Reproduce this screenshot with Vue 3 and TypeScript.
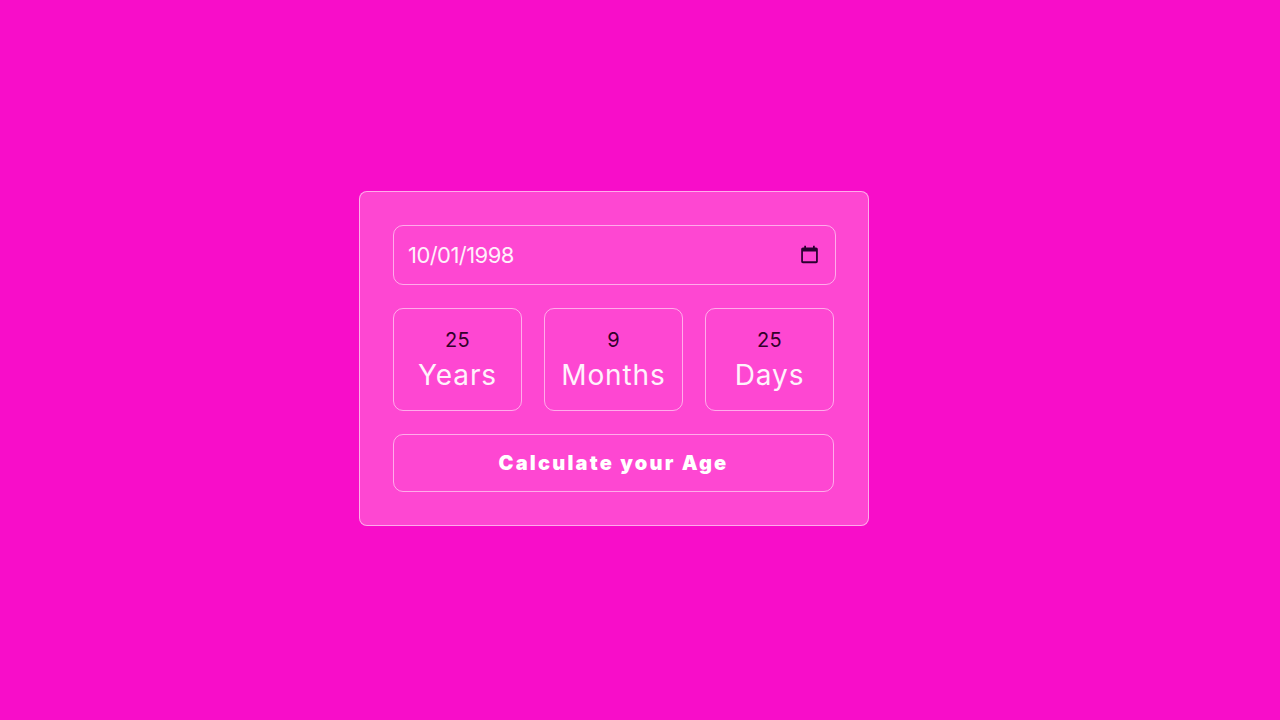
<script setup lang="ts">
interface AgePart { value: number; label: string; kind: string }
const parts: AgePart[] = [
  { value: 25, label: 'Years', kind: 'narrow' },
  { value: 9, label: 'Months', kind: 'wide' },
  { value: 25, label: 'Days', kind: 'narrow' },
]
</script>

<template>
  <main class="page">
    <section class="card">
      <div class="date-field">
        <span class="date-text">10/01/1998</span>
        <svg class="cal" viewBox="0 0 24 24" width="21" height="21" aria-hidden="true">
          <path fill="#2a0030" d="M19.500 4H18V2h-2v2H8V2H6v2H4.500C3.400 4 2.500 4.900 2.500 6v14c0 1.100.9 2 2 2h15c1.100 0 2-.9 2-2V6c0-1.100-.9-2-2-2zm0 15.800h-15V8.500h15v11.300z"/>
        </svg>
      </div>
      <div class="results">
        <div v-for="p in parts" :key="p.label" class="box" :class="p.kind">
          <span class="num">{{ p.value }}</span>
          <span class="label">{{ p.label }}</span>
        </div>
      </div>
      <button class="calc" type="button">Calculate your Age</button>
    </section>
  </main>
</template>

<style>
html, body { margin: 0; background: #f80dc9; }
</style>

<style scoped>
.page {
  width: 1280px;
  height: 720px;
  background: #f80dc9;
  overflow: hidden;
  font-family: "Inter", sans-serif;
}
.card {
  box-sizing: border-box;
  width: 510px;
  height: 335px;
  margin: 191px 0 0 359px;
  padding: 33px;
  background: #fe47d2;
  border: 1px solid rgba(255, 255, 255, 0.55);
  border-radius: 8px;
  display: flex;
  flex-direction: column;
}
.date-field {
  box-sizing: border-box;
  width: 443px;
  height: 60px;
  padding: 0 15px 0 14px;
  border: 1px solid rgba(255, 255, 255, 0.55);
  border-radius: 10px;
  display: flex;
  align-items: center;
  justify-content: space-between;
}
.date-text {
  color: #fff0fb;
  font-size: 22px;
  font-family: "Inter", sans-serif;
  font-weight: 400;
  letter-spacing: -0.55px;
}
.cal { margin-bottom: 2px; }
.results {
  display: flex;
  gap: 22px;
  margin-top: 23px;
  width: 441px;
}
.box {
  box-sizing: border-box;
  height: 103px;
  padding-top: 20px;
  border: 1px solid rgba(255, 255, 255, 0.55);
  border-radius: 10px;
  display: flex;
  flex-direction: column;
  align-items: center;
}
.narrow { width: 129px; }
.wide { width: 139px; }
.num {
  color: #33002b;
  font-family: "Inter", sans-serif;
  font-size: 20px;
  font-weight: 400;
  line-height: 23px;
  letter-spacing: 0.2px;
}
.label {
  color: #fff2fc;
  font-family: "Inter", sans-serif;
  font-weight: 400;
  font-size: 28px;
  line-height: 47px;
  letter-spacing: 0.9px;
}
.calc {
  box-sizing: border-box;
  width: 441px;
  height: 58px;
  margin-top: 23px;
  background: transparent;
  border: 1px solid rgba(255, 255, 255, 0.55);
  border-radius: 10px;
  color: #fff;
  font-family: "Inter", sans-serif;
  font-weight: 900;
  font-size: 20px;
  letter-spacing: 2.200px;
  cursor: pointer;
}
</style>
